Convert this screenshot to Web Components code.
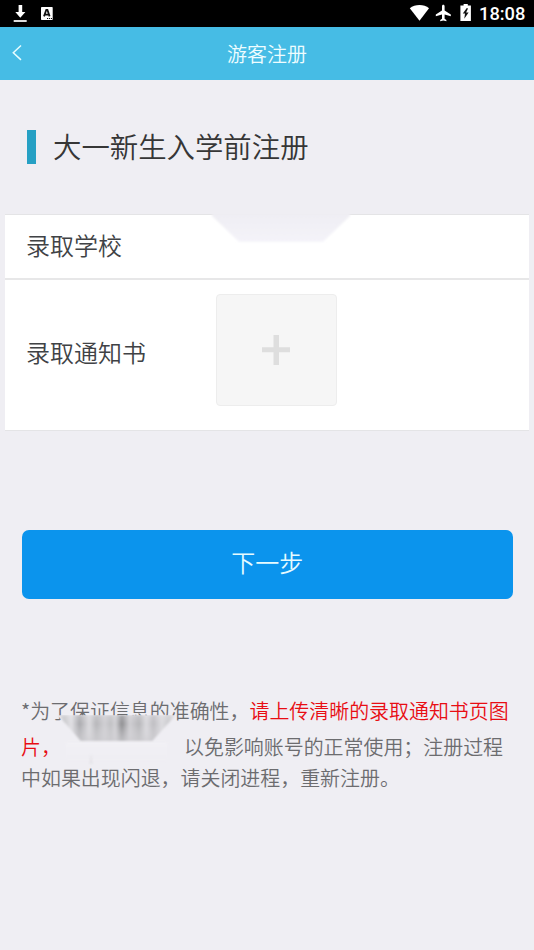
<!DOCTYPE html>
<html lang="zh-CN">
<head>
<meta charset="utf-8">
<title>游客注册</title>
<style>
html,body{margin:0;height:100%}
body{background:#efeef3;font-family:"Noto Sans CJK SC DemiLight","Noto Sans CJK SC",sans-serif;font-weight:350;overflow:hidden}
</style>
</head>
<body>
<register-page></register-page>
<script>
function define(name, html) {
  customElements.define(name, class extends HTMLElement {
    constructor() {
      super();
      this.attachShadow({mode: 'open'}).innerHTML = html;
    }
  });
}

define('status-bar', `<style>
:host{display:flex;box-sizing:border-box;height:27px;background:#000;color:#fff;justify-content:space-between}
svg{display:block}
.right{display:flex}
.time{font:500 18.3px/27px Roboto,sans-serif;width:55px;white-space:nowrap;height:27px}
</style>
<svg width="70" height="27" viewBox="0 0 70 27"><path fill="#fff" d="M18.6 5h3.6v7h3.2l-5.1 5.7-5-5.7h3.3z"/><path fill="#ddd" d="M13.7 20h13v2h-13z"/><rect x="41" y="7" width="11.7" height="13" rx=".7" fill="#fff"/><path fill="none" stroke="#111" stroke-width="1.8" d="M44 16.4l2.3-6.6h1.1l2.2 6.6M45 14.6h3.8"/><path stroke="#111" stroke-width="1" stroke-dasharray="1.2 .8" d="M47 18.5h5"/></svg>
<div class="right"><svg width="70" height="27" viewBox="409 0 70 27"><path fill="#fff" d="M409.8 8.2C415 3.900 424 3.900 429 8.200L419.500 20.800z"/><path fill="#fff" d="M443.300 4.800c.9 0 1.300.7 1.300 1.500v4.300l6.200 4v1.700l-6.200-1.900v4.300l1.800 1.300v1.300l-3.100-.9-3.100.9V20l1.800-1.300v-4.300l-6.200 1.900v-1.700l6.200-4V6.300c0-.8.400-1.500 1.300-1.500z"/><path fill="#fff" d="M463.600 4h4.200v1.500h3.100V21h-10.500V5.500h3.200z"/><path fill="#111" d="M466.800 8l-4 5.500h2.200l-.7 5.200 4.300-6.100h-2.500l1.900-4.200z"/></svg><div class="time">18:08</div></div>`);

define('title-bar', `<style>
:host{display:grid;grid-template-columns:40px 1fr 40px;height:53px;background:#46bce5;color:#effdff;font-size:20px;line-height:53px;text-align:center}
svg{display:block}
</style><svg width="40" height="53" viewBox="0 0 40 53"><path d="M21 18.500L13.300 25.700l7.700 7.200" fill="none" stroke="#e6fdff" stroke-width="1.500"/></svg><div><slot></slot></div>`);

define('section-heading', `<style>
:host{display:flex;gap:17px;padding:50px 0 0 27px;height:84px;color:#363636;font-size:28.400px;line-height:31px}
i{width:9px;height:34px;background:#26a0c4}
</style><i></i><span><slot></slot></span>`);

define('form-row', `<style>
:host{display:flex;align-items:center;box-sizing:border-box;padding-left:21px;font-size:24px;color:#404245}
.label{width:190px;padding-bottom:var(--lift,3px)}
</style><div class="label"><slot></slot></div><slot name="field"></slot>`);

define('upload-box', `<style>
:host{display:grid;place-items:center;box-sizing:border-box;width:121px;height:112px;border:1px solid #ededed;border-radius:4px;background:#f6f6f6}
svg{display:block;margin-right:2px}
</style><svg width="30" height="32" viewBox="0 0 30 32"><path fill="#dedede" d="M12.500 1h5.500v12.200H29v5H18V31h-5.500V18.200H1v-5h11.500z"/></svg>`);

define('form-card', `<style>
:host{display:block;position:relative;box-sizing:border-box;margin:0 5px;width:523.500px;height:217px;background:#fff;border-top:1px solid #e4e4e6;border-bottom:1px solid #e4e4e6}
form-row.school{height:65px;border-bottom:2px solid #e7e7e8;padding-bottom:2px}
form-row.letter{height:150px;--lift:8px}
.fade{position:absolute;left:204px;top:-2px}
upload-box{margin-top:-11px}
</style>
<form-row class="school">录取学校</form-row>
<form-row class="letter">录取通知书<upload-box slot="field"></upload-box></form-row>
<svg class="fade" width="144" height="32"><defs><linearGradient id="g" x2="0" y2="1"><stop stop-color="#efeef3"/><stop offset="1" stop-color="#f4f3f9"/></linearGradient><filter id="b"><feGaussianBlur stdDeviation=".8"/></filter></defs><path filter="url(#b)" fill="url(#g)" d="M3 0h138v3l-27 25.700H30L3 3z"/></svg>`);

define('next-button', `<style>
:host{display:block;margin:99px 21.500px 0 22px;height:69px}
button{display:block;width:100%;height:69px;border:0;border-radius:7px;padding:0 0 6px;background:#0b94ed;color:#e6fbff;font-family:inherit;font-weight:inherit;font-size:24px;line-height:63px}
</style><button type="button"><slot></slot></button>`);

define('register-note', `<style>
:host{display:block;position:relative;margin:94px 0 0 21px;width:500px;font-size:19.940px;color:#6c6c6f;white-space:nowrap}
.l1{height:35px;line-height:35px}.l2{height:35px;line-height:37px}.l3{height:30px;line-height:30px}
b{font-weight:inherit;color:#e80d13}
.l2{display:flex}
.l2 b{width:163px}
svg{position:absolute;left:32.500px;top:21.500px}
</style>
<div class="l1">*为了保证信息的准确性，<b>请上传清晰的录取通知书页图</b></div>
<div class="l2"><b>片，</b><span>以免影响账号的正常使用；注册过程</span></div>
<div class="l3">中如果出现闪退，请关闭进程，重新注册。</div>
<svg width="126" height="50" viewBox="0 0 126 50">
<defs>
<linearGradient id="s" gradientUnits="userSpaceOnUse" x1="3" x2="122" y1="0" y2="0">
<stop stop-color="#e5e4e8"/><stop offset=".06" stop-color="#c5c5c8"/><stop offset=".12" stop-color="#e2e1e5"/><stop offset=".19" stop-color="#a4a4a8"/><stop offset=".27" stop-color="#dbdade"/><stop offset=".33" stop-color="#b2b2b5"/><stop offset=".4" stop-color="#cecdd1"/><stop offset=".45" stop-color="#bdbdc0"/><stop offset=".49" stop-color="#d0cfd3"/><stop offset=".545" stop-color="#858588"/><stop offset=".61" stop-color="#cecdd1"/><stop offset=".69" stop-color="#b2b2b5"/><stop offset=".75" stop-color="#dad9dd"/><stop offset=".81" stop-color="#bbbabe"/><stop offset=".88" stop-color="#dcdbdf"/><stop offset=".94" stop-color="#c8c8cb"/><stop offset="1" stop-color="#ebeaee"/></linearGradient>
<linearGradient id="v" x2="0" y2="1"><stop stop-color="#efeef3" stop-opacity=".3"/><stop offset=".35" stop-color="#e4e3e7" stop-opacity=".08"/><stop offset="1" stop-color="#d0cfd3" stop-opacity=".75"/></linearGradient>
<linearGradient id="w" x2="0" y2="1"><stop stop-color="#f4f3f7"/><stop offset="1" stop-color="#efeef3"/></linearGradient>
<filter id="f"><feGaussianBlur stdDeviation=".8"/></filter></defs>
<path fill="#efeef3" d="M4 .5h118L104 27H25z"/>
<g filter="url(#f)"><path fill="url(#s)" d="M4 0h118L98 26H27z"/><path fill="url(#v)" d="M4 0h118L98 26H27z"/></g>
<path fill="url(#w)" filter="url(#f)" d="M12 27.500h101v18H12z" opacity=".6"/><path filter="url(#f)" fill="#dedde1" d="M37 38l2 11h-4z" opacity=".5"/>
</svg>`);

define('register-page', `<style>:host{display:block;width:534px;height:950px;overflow:hidden;background:#efeef3}</style>
<status-bar></status-bar><title-bar>游客注册</title-bar>
<section-heading>大一新生入学前注册</section-heading>
<form-card></form-card><next-button>下一步</next-button><register-note></register-note>`);
</script>
</body>
</html>
